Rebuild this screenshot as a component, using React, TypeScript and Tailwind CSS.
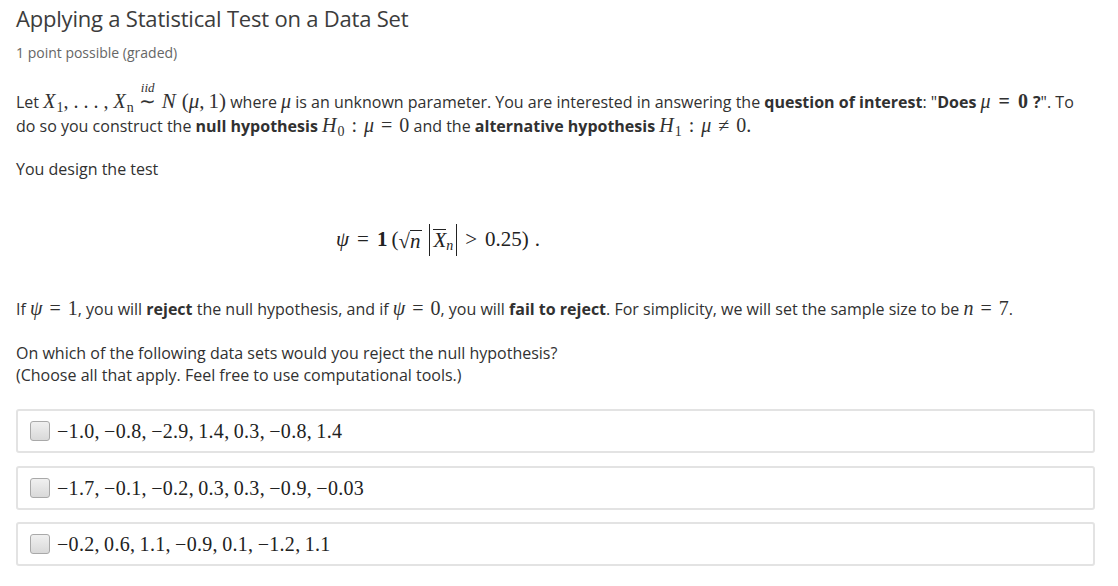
import React from "react";

const serif = "font-['Liberation_Serif','Times_New_Roman',serif]";

function V({ children }: { children: React.ReactNode }) {
  return <i className={`${serif} text-[20px] leading-none`}>{children}</i>;
}
function R({ children, b }: { children: React.ReactNode; b?: boolean }) {
  return <span className={`${serif} text-[20px] leading-none ${b ? "font-bold" : ""}`}>{children}</span>;
}
function Sub({ children }: { children: React.ReactNode }) {
  return <span className={`${serif} text-[14px] leading-none relative top-[4px] ml-[1px]`}>{children}</span>;
}
function Eq({ children, b }: { children: React.ReactNode; b?: boolean }) {
  return <span className={`${serif} text-[20px] leading-none ${b ? "font-bold mx-[8px]" : "mx-[7px]"}`}>{children}</span>;
}

function Choice({ text }: { text: string }) {
  return (
    <div className="h-[44px] flex items-center rounded-[3px] border-2 border-[#e3e3e3] bg-white pl-[12px]">
      <span className="w-[20px] h-[20px] rounded-[3px] border border-[#a9a9a9] bg-gradient-to-b from-[#f0f0f0] to-[#d9d9d9] shrink-0" />
      <span className={`${serif} text-[20px] ml-[7px] text-[#222] tracking-[0.3px]`}>{text}</span>
    </div>
  );
}

export default function App() {
  const ts = "\u2009";
  return (
    <div className="w-[1118px] h-[586px] bg-white overflow-hidden font-['Open_Sans',sans-serif] text-[#313131] pl-[16px] pr-[23px]">
      <h1 className="pt-[4px] text-[22px] leading-[28px] font-normal text-[#3c3c3c] tracking-[-0.2px]">
        Applying a Statistical Test on a Data Set
      </h1>
      <div className="mt-[12px] text-[14px] leading-[18px] text-[#666]">1 point possible (graded)</div>

      <div className="mt-[28px] text-[16px] leading-[24px]">
        <div className="whitespace-nowrap h-[24px]">
          Let <V>X</V>
          <Sub>1</Sub>
          <R>
            <span className="tracking-[0.5px]">,{ts}.{ts}.{ts}.{ts},{ts}</span>
          </R>
          <V>X</V>
          <Sub>n</Sub>
          <span className="relative inline-block w-[20px] mx-[4px] text-center">
            <span className={`${serif} text-[20px] leading-none`}>∼</span>
            <i className={`${serif} absolute left-0 right-0 -top-[9px] text-center text-[13px] leading-none`}>iid</i>
          </span>
          <i className={`${serif} text-[21px] leading-none`}>N</i>
          <span className={`${serif} text-[21px] leading-none ml-[6px]`}>(</span>
          <i className={`${serif} text-[21px] leading-none`}>μ</i>
          <span className={`${serif} text-[21px] leading-none`}>,</span>
          <span className={`${serif} text-[21px] leading-none ml-[4px]`}>1)</span> where <V>μ</V> is an unknown parameter. You are interested in answering the{" "}
          <b>question of interest</b>: "<b>Does </b>
          <V>μ</V>
          <Eq b>=</Eq>
          <R b>0</R>
          <b className="ml-[5px]">?</b>". To
        </div>
        <div className="whitespace-nowrap h-[24px]">
          do so you construct the <b>null hypothesis</b> <V>H</V>
          <Sub>0</Sub>
          <Eq>:</Eq>
          <V>μ</V>
          <Eq>=</Eq>
          <R>0</R> and the <b>alternative hypothesis</b> <V>H</V>
          <Sub>1</Sub>
          <Eq>:</Eq>
          <V>μ</V>
          <Eq>≠</Eq>
          <R>0.</R>
        </div>
      </div>

      <div className="mt-[20px] text-[16px] leading-[22px]">You design the test</div>

      <div className="mt-[40px] h-[40px] flex items-center pl-[320px]">
        <span className={`${serif} text-[21px] flex items-center whitespace-nowrap text-[#222]`}>
          <i>ψ</i>
          <span className="mx-[8px]">=</span>
          <b>1</b>
          <span className="ml-[4px]">(</span>
          <span className="flex items-end">
            <span className="text-[21px] leading-none">√</span>
            <i className="border-t border-[#222] leading-[21px] pr-[2px] mt-[2px]">n</i>
          </span>
          <span className="ml-[7px] flex items-center border-l border-r border-[#222] h-[32px] px-[3px]">
            <i className="border-t border-[#222] leading-[21px]">X</i>
            <i className="text-[14px] relative top-[5px]">n</i>
          </span>
          <span className="mx-[8px]">&gt;</span>
          <span>0.25)</span>
          <span className="ml-[6px]">.</span>
        </span>
      </div>

      <div className="mt-[38px] text-[16px] leading-[22px] whitespace-nowrap h-[22px]">
        If <V>ψ</V>
        <Eq>=</Eq>
        <R>1</R>, you will <b>reject</b> the null hypothesis, and if <V>ψ</V>
        <Eq>=</Eq>
        <R>0</R>, you will <b>fail to reject</b>. For simplicity, we will set the sample size to be <V>n</V>
        <Eq>=</Eq>
        <R>7</R>.
      </div>

      <div className="mt-[22px] text-[16px] leading-[22px]">
        <div>On which of the following data sets would you reject the null hypothesis?</div>
        <div>(Choose all that apply. Feel free to use computational tools.)</div>
      </div>

      <div className="mt-[23px] flex flex-col gap-[12.5px]">
        <Choice text={`−1.0,${ts}−0.8,${ts}−2.9,${ts}1.4,${ts}0.3,${ts}−0.8,${ts}1.4`} />
        <Choice text={`−1.7,${ts}−0.1,${ts}−0.2,${ts}0.3,${ts}0.3,${ts}−0.9,${ts}−0.03`} />
        <Choice text={`−0.2,${ts}0.6,${ts}1.1,${ts}−0.9,${ts}0.1,${ts}−1.2,${ts}1.1`} />
      </div>
    </div>
  );
}
